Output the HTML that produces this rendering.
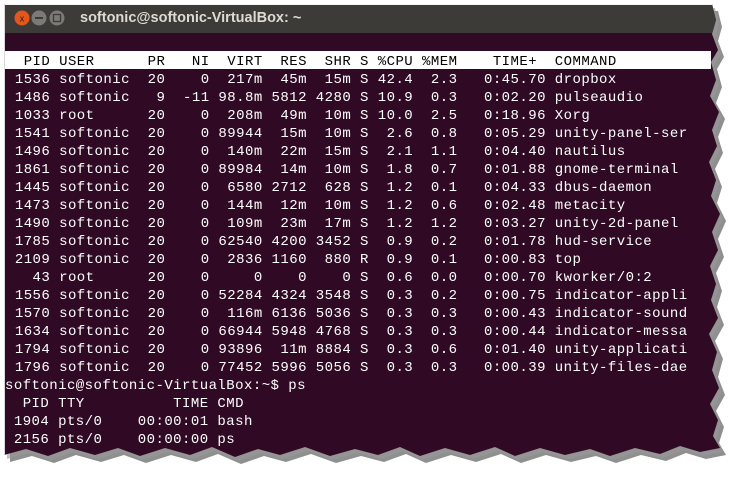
<!DOCTYPE html>
<html><head><meta charset="utf-8"><style>
html,body{margin:0;padding:0;background:#fff;width:747px;height:484px;overflow:hidden}
#wrap{position:absolute;left:0;top:0;width:747px;height:484px}
svg{position:absolute;left:0;top:0}
.title{position:absolute;left:80px;top:10px;font:bold 14.5px "Liberation Sans",sans-serif;color:#dfdbd2}
pre{position:absolute;margin:0;left:6px;font:14px/18px "Liberation Mono",monospace;letter-spacing:0.45px;color:#fff;white-space:pre}
.hdr{position:absolute;left:5px;top:51px;width:706px;height:18px;background:#fff}
</style></head><body><div id="wrap">
<svg width="747" height="484">
<defs><clipPath id="c"><path id="p" d="M4,4 L712,4 L716,20 L712,34 L718,50 L711,62 L716,80 L710,96 L719,112 L712,130 L717,146 L709,162 L716,180 L711,196 L720,214 L712,232 L718,250 L710,266 L716,284 L711,300 L718,318 L709,334 L717,352 L712,370 L719,388 L710,404 L718,420 L713,436 L720,448 L700,452 L680,446 L660,454 L635,448 L610,456 L590,449 L565,455 L540,448 L515,456 L495,447 L470,455 L445,448 L420,456 L400,447 L378,455 L355,449 L330,456 L305,447 L280,455 L258,449 L235,457 L212,447 L190,455 L165,448 L140,456 L118,448 L95,455 L70,448 L48,456 L26,449 L4,455 Z"/></clipPath></defs>
<g transform="translate(6,7)" fill="#6a6a6a" opacity="0.75"><use href="#p"/></g>
<g transform="translate(3,4)" fill="#9a9a9a" opacity="0.6"><use href="#p"/></g>
<g clip-path="url(#c)">
<rect x="0" y="0" width="747" height="484" fill="#300a24"/>
<rect x="0" y="3" width="747" height="30" fill="#3c3b37"/>
<rect x="0" y="3" width="747" height="2" fill="#f4f4f4"/>
<rect x="4" y="3" width="1" height="460" fill="#d8d8d8"/>
</g>
<circle cx="22" cy="18" r="7.5" fill="#e2571d"/>
<text x="22" y="21.5" font-family="Liberation Sans" font-size="9" fill="#3c1a0a" text-anchor="middle">x</text>
<circle cx="39" cy="18" r="7.5" fill="#7b7a74"/>
<rect x="35" y="17" width="8" height="2" fill="#3c3b37"/>
<circle cx="57" cy="18" r="7.5" fill="#7b7a74"/>
<rect x="53.5" y="14.5" width="7" height="7" fill="none" stroke="#3c3b37" stroke-width="1.3"/>
</svg>
<div class="title">softonic@softonic-VirtualBox: ~</div>
<div class="hdr"></div>
<pre style="top:53px;color:#000">  PID USER      PR   NI  VIRT  RES  SHR S %CPU %MEM    TIME+  COMMAND</pre>
<pre style="top:71px"> 1536 softonic  20    0  217m  45m  15m S 42.4  2.3   0:45.70 dropbox
 1486 softonic   9  -11 98.8m 5812 4280 S 10.9  0.3   0:02.20 pulseaudio
 1033 root      20    0  208m  49m  10m S 10.0  2.5   0:18.96 Xorg
 1541 softonic  20    0 89944  15m  10m S  2.6  0.8   0:05.29 unity-panel-ser
 1496 softonic  20    0  140m  22m  15m S  2.1  1.1   0:04.40 nautilus
 1861 softonic  20    0 89984  14m  10m S  1.8  0.7   0:01.88 gnome-terminal
 1445 softonic  20    0  6580 2712  628 S  1.2  0.1   0:04.33 dbus-daemon
 1473 softonic  20    0  144m  12m  10m S  1.2  0.6   0:02.48 metacity
 1490 softonic  20    0  109m  23m  17m S  1.2  1.2   0:03.27 unity-2d-panel
 1785 softonic  20    0 62540 4200 3452 S  0.9  0.2   0:01.78 hud-service
 2109 softonic  20    0  2836 1160  880 R  0.9  0.1   0:00.83 top
   43 root      20    0     0    0    0 S  0.6  0.0   0:00.70 kworker/0:2
 1556 softonic  20    0 52284 4324 3548 S  0.3  0.2   0:00.75 indicator-appli
 1570 softonic  20    0  116m 6136 5036 S  0.3  0.3   0:00.43 indicator-sound
 1634 softonic  20    0 66944 5948 4768 S  0.3  0.3   0:00.44 indicator-messa
 1794 softonic  20    0 93896  11m 8884 S  0.3  0.6   0:01.40 unity-applicati
 1796 softonic  20    0 77452 5996 5056 S  0.3  0.3   0:00.39 unity-files-dae</pre>
<pre style="top:377px;left:5px">softonic@softonic-VirtualBox:~$ ps
  PID TTY          TIME CMD
 1904 pts/0    00:00:01 bash
 2156 pts/0    00:00:00 ps</pre>
</div></body></html>
